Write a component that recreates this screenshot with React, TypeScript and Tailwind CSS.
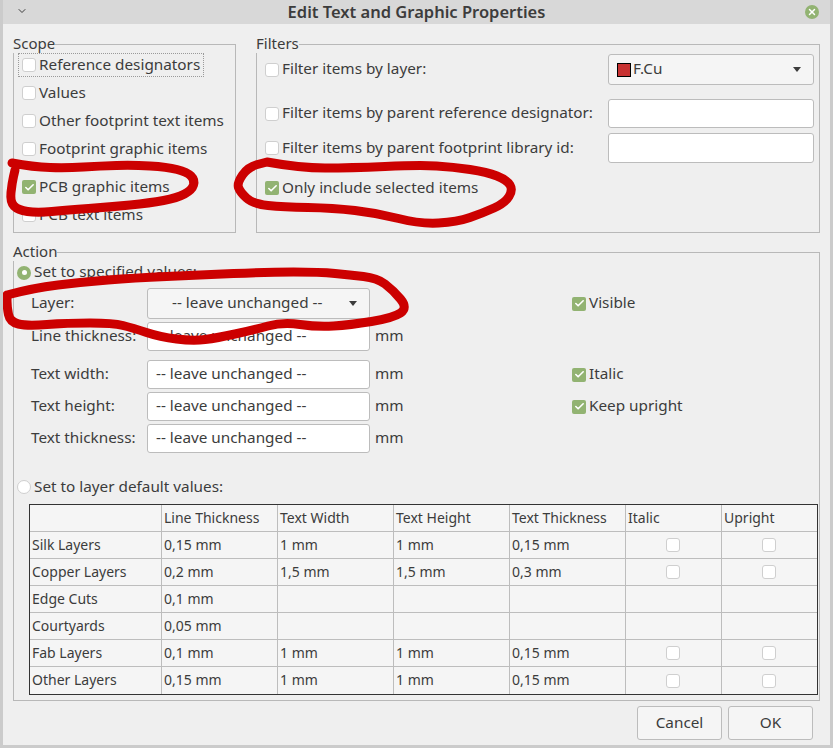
import { Check, ChevronDown, X } from "lucide-react";
import type { ReactNode } from "react";

type Point = [number, number];

const scribbles: Point[][] = [
  [[12,163],[33,167],[67,168],[100,166],[133,165],[167,167],[187,172],[195,180],[192,190],[177,198],[150,203],[110,207],[67,210],[37,213],[18,210],[10,202],[12,183],[15,170]],
  [[267,162],[300,168],[350,168],[420,165],[453,167],[487,172],[507,180],[513,190],[505,203],[483,213],[457,222],[420,224],[377,213],[333,208],[283,207],[253,204],[240,192],[237,183],[248,167],[267,162]],
  [[7,295],[33,288],[83,282],[133,278],[200,275],[267,272],[320,272],[350,275],[377,278],[393,290],[408,308],[393,318],[350,325],[317,327],[283,322],[253,330],[217,338],[193,341],[160,337],[133,328],[113,323],[67,323],[27,326],[10,322],[7,307],[7,295]],
];

// quadratic curves through the midpoints, so the marker line stays round
const toPath = (pts: Point[]) => {
  let d = `M${pts[0][0]} ${pts[0][1]}`;
  for (let i = 1; i < pts.length - 1; i++) {
    const mx = (pts[i][0] + pts[i + 1][0]) / 2;
    const my = (pts[i][1] + pts[i + 1][1]) / 2;
    d += ` Q${pts[i][0]} ${pts[i][1]} ${mx} ${my}`;
  }
  const last = pts[pts.length - 1];
  return `${d} L${last[0]} ${last[1]}`;
};

// text sits a pixel higher than the boxes next to it
const lift = "whitespace-nowrap pb-[2px]";

function Box({ checked }: { checked?: boolean }) {
  return checked ? (
    <span className="flex h-[14px] w-[14px] shrink-0 items-center justify-center rounded-[2px] bg-[#92b372]">
      <Check size={11} strokeWidth={3.5} className="text-white" />
    </span>
  ) : (
    <span className="h-[14px] w-[14px] shrink-0 rounded-[3px] border border-[#cfcfcf] bg-white" />
  );
}

function CheckRow({ label, checked }: { label: string; checked?: boolean }) {
  return (
    <div className="flex h-6 items-center gap-[3px] border border-transparent pl-[3px]">
      <Box checked={checked} />
      <span className={lift}>{label}</span>
    </div>
  );
}

function Arrow() {
  return <span className="h-0 w-0 border-x-[4.5px] border-t-[5px] border-x-transparent border-t-[#3c3c3c]" />;
}

function Group({ title, className, children }: { title: string; className: string; children: ReactNode }) {
  return (
    <fieldset className={`border border-[#b8b8b8] ${className}`}>
      <legend className="-ml-px h-[18px] text-[15px] leading-[16px]">{title}</legend>
      {children}
    </fieldset>
  );
}

function LeaveInput() {
  return (
    <div className="flex h-[29px] w-[223px] items-center rounded-[3px] border border-[#bcbcbc] bg-white pl-2">
      <span className={lift}>-- leave unchanged --</span>
    </div>
  );
}

function FormRow({ label, control, unit, right, className }: { label: string; control: ReactNode; unit?: boolean; right?: ReactNode; className?: string }) {
  return (
    <div className={`flex items-center pl-[17px] ${className ?? ""}`}>
      <span className={`w-[116px] ${lift}`}>{label}</span>
      {control}
      <span className={`ml-[5px] w-[197px] ${lift}`}>{unit ? "mm" : ""}</span>
      {right}
    </div>
  );
}

function SideCheck({ label }: { label: string }) {
  return (
    <div className="flex items-center gap-[3px]">
      <Box checked />
      <span className={lift}>{label}</span>
    </div>
  );
}

const columns = ["", "Line Thickness", "Text Width", "Text Height", "Text Thickness", "Italic", "Upright"];
const rows = [
  { name: "Silk Layers", line: "0,15 mm", w: "1 mm", h: "1 mm", t: "0,15 mm", boxes: true },
  { name: "Copper Layers", line: "0,2 mm", w: "1,5 mm", h: "1,5 mm", t: "0,3 mm", boxes: true },
  { name: "Edge Cuts", line: "0,1 mm", w: "", h: "", t: "", boxes: false },
  { name: "Courtyards", line: "0,05 mm", w: "", h: "", t: "", boxes: false },
  { name: "Fab Layers", line: "0,1 mm", w: "1 mm", h: "1 mm", t: "0,15 mm", boxes: true },
  { name: "Other Layers", line: "0,15 mm", w: "1 mm", h: "1 mm", t: "0,15 mm", boxes: true },
];

const gridRow = "grid h-[27px] grid-cols-[132px_116px_116px_116px_116px_96px_96px] border-[#bdbdbd]";
const cell = "flex items-center border-r border-[#bdbdbd] last:border-r-0";
const textCell = `${cell} pb-[2px] pl-[2px]`;
const boxCell = `${cell} justify-center pr-[2px]`;

function LayerTable() {
  return (
    <div className="ml-[15px] mt-[6px] w-[789px] border border-[#333333] bg-[#f5f5f5] text-[14px]">
      <div className={`${gridRow} border-b`}>
        {columns.map((c, i) => (
          <div key={i} className={textCell}>{c}</div>
        ))}
      </div>
      {rows.map((r, i) => (
        <div key={r.name} className={`${gridRow} ${i < rows.length - 1 ? "border-b" : ""}`}>
          <div className={textCell}>{r.name}</div>
          <div className={textCell}>{r.line}</div>
          <div className={textCell}>{r.w}</div>
          <div className={textCell}>{r.h}</div>
          <div className={textCell}>{r.t}</div>
          <div className={boxCell}>{r.boxes && <Box />}</div>
          <div className={boxCell}>{r.boxes && <Box />}</div>
        </div>
      ))}
    </div>
  );
}

export default function App() {
  return (
    <div className="relative flex h-[748px] w-[833px] flex-col overflow-hidden border-x-[3px] border-b-[3px] border-[#cbcbcb] bg-[#efefef] font-['Noto_Sans',sans-serif] text-[15.3px] text-[#3c3c3c]">
      <header className="relative flex h-6 shrink-0 items-center justify-center bg-[#d8d8d8] text-[16.5px] font-semibold">
        <ChevronDown size={12} strokeWidth={2} className="absolute left-[13px] top-[5px]" />
        Edit Text and Graphic Properties
        <span className="absolute right-[11px] top-[5px] flex h-[14px] w-[14px] items-center justify-center rounded-full bg-[#92b372]">
          <X size={10} strokeWidth={3.5} className="text-white" />
        </span>
      </header>

      <main className="flex flex-1 flex-col px-[10px] pt-[11px]">
        <div className="flex gap-5">
          <Group title="Scope" className="h-[198px] w-[223px]">
            <div className="pl-[4px]">
              <div className="flex h-6 w-[186px] items-center gap-[3px] border border-dotted border-[#9a9a9a] pl-[3px]">
                <Box />
                <span className={lift}>Reference designators</span>
              </div>
              <div className="mt-1 flex flex-col gap-1">
                <CheckRow label="Values" />
                <CheckRow label="Other footprint text items" />
                <CheckRow label="Footprint graphic items" />
              </div>
              <div className="mt-[14px] flex flex-col gap-1">
                <CheckRow label="PCB graphic items" checked />
                <CheckRow label="PCB text items" />
              </div>
            </div>
          </Group>

          <Group title="Filters" className="h-[198px] flex-1">
            <div className="pl-[4px] pr-[5px] pt-px">
              <div className="flex h-[31px] items-center">
                <CheckRow label="Filter items by layer:" />
                <div className="ml-auto flex h-[31px] w-[206px] items-center rounded-[3px] border border-[#bcbcbc] bg-[#f5f5f5] pl-2 pr-3">
                  <span className="mr-[2px] h-[14px] w-[14px] border border-black bg-[#c83232]" />
                  <span className={lift}>F.Cu</span>
                  <span className="ml-auto flex"><Arrow /></span>
                </div>
              </div>
              <div className="mt-[14px] flex h-[29px] items-center">
                <CheckRow label="Filter items by parent reference designator:" />
                <div className="ml-auto h-[29px] w-[206px] rounded-[3px] border border-[#bcbcbc] bg-white" />
              </div>
              <div className="mt-[5px] flex h-[30px] items-center">
                <CheckRow label="Filter items by parent footprint library id:" />
                <div className="ml-auto h-[30px] w-[206px] rounded-[3px] border border-[#bcbcbc] bg-white" />
              </div>
              <div className="mt-[13px]">
                <CheckRow label="Only include selected items" checked />
              </div>
            </div>
          </Group>
        </div>

        <Group title="Action" className="mt-[10px] h-[458px]">
          <div className="flex h-[23px] items-center gap-[3px] pl-[3px]">
            <span className="flex h-[14px] w-[14px] items-center justify-center rounded-full bg-[#92b372]">
              <span className="h-[5px] w-[5px] rounded-full bg-white" />
            </span>
            <span className={lift}>Set to specified values:</span>
          </div>
          <FormRow
            className="mt-1"
            label="Layer:"
            control={
              <div className="flex h-[31px] w-[223px] items-center rounded-[3px] border border-[#bcbcbc] bg-[#f5f5f5] pl-6 pr-3">
                <span className={lift}>-- leave unchanged --</span>
                <span className="ml-auto flex"><Arrow /></span>
              </div>
            }
            right={<SideCheck label="Visible" />}
          />
          <FormRow className="mt-[3px]" label="Line thickness:" control={<LeaveInput />} unit />
          <FormRow className="mt-[9px]" label="Text width:" control={<LeaveInput />} unit right={<SideCheck label="Italic" />} />
          <FormRow className="mt-[3px]" label="Text height:" control={<LeaveInput />} unit right={<SideCheck label="Keep upright" />} />
          <FormRow className="mt-[3px]" label="Text thickness:" control={<LeaveInput />} unit />
          <div className="mt-[23px] flex h-[22px] items-center gap-[3px] pl-[3px]">
            <span className="h-[14px] w-[14px] rounded-full border border-[#cfcfcf] bg-white" />
            <span className={lift}>Set to layer default values:</span>
          </div>
          <LayerTable />
        </Group>

        <footer className="mt-[5px] flex justify-end gap-[6px] pr-[7px]">
          <button className="h-[34px] w-[85px] rounded-[3px] border border-[#bcbcbc] bg-[#f5f5f5] pb-[2px]">Cancel</button>
          <button className="h-[34px] w-[85px] rounded-[3px] border border-[#bcbcbc] bg-[#f5f5f5] pb-[2px]">OK</button>
        </footer>
      </main>

      {/* red marker annotations drawn over the dialog */}
      <svg className="pointer-events-none absolute left-[-3px] top-0" width="833" height="748" fill="none">
        {scribbles.map((pts, i) => (
          <path key={i} d={toPath(pts)} stroke="#cc0000" strokeWidth="9" strokeLinecap="round" strokeLinejoin="round" />
        ))}
      </svg>
    </div>
  );
}
